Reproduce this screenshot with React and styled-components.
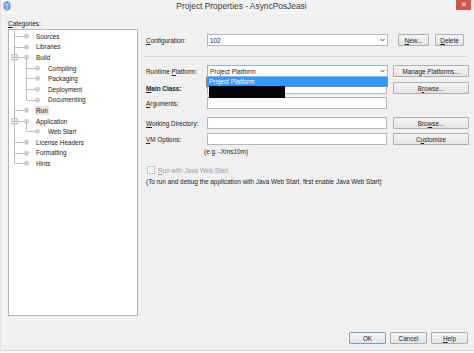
import React from 'react';
import styled, { createGlobalStyle } from 'styled-components';

const GlobalStyle = createGlobalStyle`
  html, body {
    margin: 0;
    padding: 0;
    background: #fbfbfb;
  }
  body {
    font-family: "Liberation Sans", Arial, sans-serif;
  }
`;

const Window = styled.div`
  width: 474px;
  height: 351px;
  box-sizing: border-box;
  background: #f0f0f0;
  border-bottom: 1px solid #d6d6d6;
  border-left: 1px solid #e2e2e2;
  display: flex;
  flex-direction: column;
  position: relative;
  overflow: hidden;
  font-size: 6.4px;
  color: #222;
`;

const TitleBar = styled.div`
  height: 14px;
  flex: none;
  display: flex;
  align-items: flex-start;
  background: #f2f2f2;
`;

const AppIcon = styled.svg`
  width: 8px;
  height: 10px;
  margin: 1px 0 0 2px;
  flex: none;
`;

const Title = styled.div`
  flex: 1;
  text-align: center;
  font-size: 8.4px;
  line-height: 12px;
  color: #3a3a3a;
  padding-left: 16px;
`;

const CloseButton = styled.div`
  width: 15px;
  height: 10px;
  margin-right: 3px;
  background: #d0574c;
  color: #fff;
  font-size: 7px;
  line-height: 10px;
  text-align: center;
  flex: none;
`;

const Content = styled.div`
  height: 308px;
  flex: none;
  display: flex;
`;

const LeftPane = styled.div`
  width: 137px;
  flex: none;
  box-sizing: border-box;
  padding: 6px 0 0 7px;
`;

const PaneLabel = styled.div`
  height: 8px;
  line-height: 8px;
`;

const TreeBox = styled.div`
  margin-top: 1px;
  height: 287px;
  box-sizing: border-box;
  background: #fff;
  border: 1px solid #b4b6ba;
  padding-top: 1px;
`;

const TreeRow = styled.div`
  height: 10.6px;
  display: flex;
  align-items: center;
`;

const Connector = styled.svg`
  flex: none;
  display: block;
`;

const NodeText = styled.span`
  margin-left: 2px;
  padding: 0 1px;
  line-height: 9px;
  background: ${p => (p.selected ? '#e3e3e3' : 'transparent')};
`;

const RightPane = styled.div`
  flex: 1;
  padding: 20px 0 0 8px;
`;

const Row = styled.div`
  display: flex;
  align-items: center;
  height: ${p => p.h || 12}px;
  margin-top: ${p => p.mt || 0}px;
  padding-left: ${p => p.indent || 0}px;
`;

const Label = styled.div`
  width: 61px;
  flex: none;
  font-weight: ${p => (p.bold ? 700 : 400)};
`;

const Field = styled.div`
  width: ${p => p.w || 180}px;
  height: 12px;
  box-sizing: border-box;
  background: #fff;
  border: 1px solid ${p => (p.focus ? '#8fb5dc' : '#b4b6ba')};
  display: flex;
  align-items: center;
  padding-left: 2px;
  flex: none;
`;

const FieldText = styled.span`
  flex: 1;
`;

const Chevron = styled.svg`
  width: 5px;
  height: 4px;
  margin-right: 2px;
`;

const Button = styled.div`
  width: ${p => p.w || 76}px;
  height: ${p => p.h || 12}px;
  margin-left: ${p => p.ml || 6}px;
  box-sizing: border-box;
  flex: none;
  border: 1px solid ${p => (p.primary ? '#6ea2d6' : '#adadad')};
  border-radius: 1px;
  background: linear-gradient(#f5f5f5, #e4e4e4);
  display: flex;
  align-items: center;
  justify-content: center;
  color: #222;
`;

const Separator = styled.div`
  margin-top: 10px;
  height: 1px;
  width: 323px;
  margin-left: -2px;
  background: #d5d5d5;
  border-bottom: 1px solid #fafafa;
`;

const Hint = styled.div`
  height: 10px;
  line-height: 10px;
  margin-top: ${p => p.mt || 0}px;
  padding-left: ${p => p.indent || 0}px;
`;

const CheckBox = styled.div`
  width: 8px;
  height: 8px;
  box-sizing: border-box;
  border: 1px solid #c6c6c6;
  background: #f6f6f6;
  margin: 0 3px 0 1px;
`;

const Disabled = styled.span`
  color: #9d9d9d;
`;

const Footer = styled.div`
  display: flex;
  justify-content: flex-end;
  padding: 10px 6px 0 0;
`;

const Popup = styled.div`
  position: absolute;
  left: 205px;
  top: 77px;
  width: 182px;
  height: 10px;
  box-sizing: border-box;
  border: 1px solid #8a8a8a;
  border-top: none;
  background: #3399ff;
  color: #fff;
  padding-left: 2px;
  line-height: 9px;
`;

const Redaction = styled.div`
  position: absolute;
  left: 208px;
  top: 86px;
  width: 76px;
  height: 12px;
  background: #050505;
`;

const H = 10.6;
const M = 5.3;

const Branch = ({ level, last, lastChild, expanded }) => {
  const w = level === 0 ? 24 : 36;
  return (
    <Connector width={w} height={H} viewBox={`0 0 ${w} ${H}`}>
      <g stroke="#bdbdbd" strokeWidth="1" shapeRendering="crispEdges">
        <line x1="5.5" y1="0" x2="5.5" y2={last ? M : H} />
        {level === 0 && <line x1="5.5" y1={M} x2="15" y2={M} />}
        {level === 0 && expanded && <line x1="17.5" y1={M + 2} x2="17.5" y2={H} />}
        {level === 1 && <line x1="17.5" y1="0" x2="17.5" y2={lastChild ? M : H} />}
        {level === 1 && <line x1="17.5" y1={M} x2="26" y2={M} />}
      </g>
      {expanded && (
        <g>
          <rect x="3" y={M - 2.5} width="5" height="5" fill="#fff" stroke="#9a9a9a" strokeWidth="0.8" />
          <line x1="4.2" y1={M} x2="6.8" y2={M} stroke="#555" strokeWidth="0.8" />
        </g>
      )}
      <circle cx={level === 0 ? 17.5 : 28.5} cy={M} r="1.9" fill="#ececec" stroke="#9c9c9c" strokeWidth="0.7" />
      <circle cx={level === 0 ? 17.5 : 28.5} cy={M} r="0.6" fill="#9c9c9c" />
    </Connector>
  );
};

const tree = [
  { name: 'Sources', level: 0 },
  { name: 'Libraries', level: 0 },
  { name: 'Build', level: 0, expanded: true },
  { name: 'Compiling', level: 1 },
  { name: 'Packaging', level: 1 },
  { name: 'Deployment', level: 1 },
  { name: 'Documenting', level: 1, lastChild: true },
  { name: 'Run', level: 0, selected: true },
  { name: 'Application', level: 0, expanded: true },
  { name: 'Web Start', level: 1, lastChild: true },
  { name: 'License Headers', level: 0 },
  { name: 'Formatting', level: 0 },
  { name: 'Hints', level: 0, last: true },
];

const Arrow = () => (
  <Chevron viewBox="0 0 5 4">
    <path d="M0.5 0.8 L2.5 3 L4.5 0.8" fill="none" stroke="#444" strokeWidth="0.9" />
  </Chevron>
);

export default function App() {
  return (
    <>
      <GlobalStyle />
      <Window>
        <TitleBar>
          <AppIcon viewBox="0 0 8 10">
            <path d="M1 2 L4 0.5 L7 2 L7 7.5 L4 9.5 L1 7.5 Z" fill="#7aa7d8" stroke="#3d6ea8" strokeWidth="0.6" />
            <path d="M1 2 L4 3.5 L7 2 M4 3.5 L4 9.5" fill="none" stroke="#e8f1fb" strokeWidth="0.6" />
          </AppIcon>
          <Title>Project Properties - AsyncPosJeasi</Title>
          <CloseButton>✕</CloseButton>
        </TitleBar>
        <Content>
          <LeftPane>
            <PaneLabel><u>C</u>ategories:</PaneLabel>
            <TreeBox>
              {tree.map(n => (
                <TreeRow key={n.name}>
                  <Branch level={n.level} last={n.last} lastChild={n.lastChild} expanded={n.expanded} />
                  <NodeText selected={n.selected}>{n.name}</NodeText>
                </TreeRow>
              ))}
            </TreeBox>
          </LeftPane>
          <RightPane>
            <Row>
              <Label><u>C</u>onfiguration:</Label>
              <Field w={181}>
                <FieldText>102</FieldText>
                <Arrow />
              </Field>
              <Button w={31} ml={10}><u>N</u>ew...</Button>
              <Button w={29} ml={6}><u>D</u>elete</Button>
            </Row>
            <Separator />
            <Row mt={7}>
              <Label>Runtime <u>P</u>latform:</Label>
              <Field w={181} focus>
                <FieldText>Project Platform</FieldText>
                <Arrow />
              </Field>
              <Button ml={5}>Manage Platforms...</Button>
            </Row>
            <Row mt={5}>
              <Label bold><u>M</u>ain Class:</Label>
              <Field />
              <Button>B<u>r</u>owse...</Button>
            </Row>
            <Row mt={3}>
              <Label><u>A</u>rguments:</Label>
              <Field />
            </Row>
            <Row mt={8}>
              <Label><u>W</u>orking Directory:</Label>
              <Field />
              <Button>Bro<u>w</u>se...</Button>
            </Row>
            <Row mt={4}>
              <Label><u>V</u>M Options:</Label>
              <Field />
              <Button>C<u>u</u>stomize</Button>
            </Row>
            <Hint mt={2} indent={58}>(e.g. -Xms10m)</Hint>
            <Row mt={8} h={10}>
              <CheckBox />
              <Disabled><u>R</u>un with Java Web Start</Disabled>
            </Row>
            <Hint mt={2}>(To run and debug the application with Java Web Start, first enable Java Web Start)</Hint>
          </RightPane>
        </Content>
        <Footer>
          <Button w={37} ml={0} primary>OK</Button>
          <Button w={37} ml={4}>Cancel</Button>
          <Button w={37} ml={4}><u>H</u>elp</Button>
        </Footer>
        <Popup>Project Platform</Popup>
        <Redaction />
      </Window>
    </>
  );
}
